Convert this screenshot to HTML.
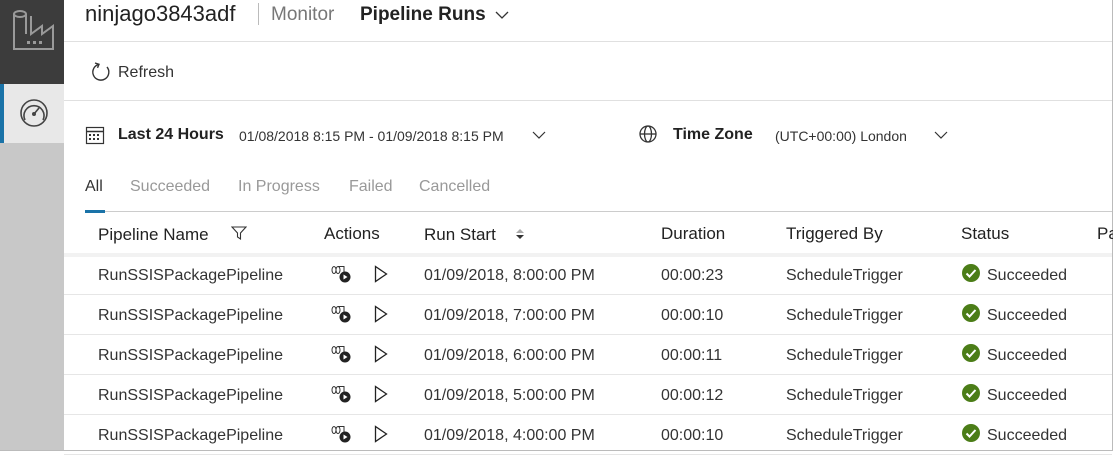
<!DOCTYPE html>
<html><head><style>
*{margin:0;padding:0;box-sizing:border-box}
body{width:1113px;height:451px;overflow:hidden;background:#fff;font-family:"Segoe UI","Liberation Sans",sans-serif;color:#222;position:relative}
.a{position:absolute;white-space:nowrap}
.sb1{left:0;top:0;width:64px;height:84px;background:#3c3c3c}
.sb2{left:0;top:84px;width:64px;height:59px;background:#e8e8e8;border-left:4px solid #1a73a8}
.sb3{left:0;top:143px;width:64px;height:308px;background:#c8c8c8}
.hl{height:1px;background:#e0e0e0}
.row{left:64px;width:1048px;height:40px;border-bottom:1px solid #e6e6e6;font-size:16px;color:#333}
.row span{position:absolute;top:12px}
.th{font-size:17px;color:#222}
</style></head><body>
<div class="a sb1"><svg width="64" height="84"><g fill="none" stroke="#9a9a9a" stroke-width="2"><path d="M14 14v35h39V26l-11 8v-8l-11 8V16"/><ellipse cx="20" cy="14" rx="6" ry="3"/><path d="M26 14v20"/></g><g fill="#9a9a9a"><rect x="27" y="41" width="3" height="3"/><rect x="33" y="41" width="3" height="3"/><rect x="39" y="41" width="3" height="3"/></g></svg></div>
<div class="a sb2"><svg width="60" height="59" style="position:absolute;left:-4px"><g fill="none" stroke="#444" stroke-width="1.6"><circle cx="34" cy="29" r="13"/><path d="M25 36a10 10 0 1 1 18 0"/><path d="M34 30l5-6"/></g><circle cx="34" cy="30" r="2" fill="#444"/></svg></div>
<div class="a sb3"></div>
<div class="a" style="right:0;top:0;width:1px;height:451px;background:#bbb"></div>
<div class="a" style="left:0;bottom:0;width:1113px;height:1px;background:#bbb"></div>

<div class="a" style="left:85px;top:0;font-size:22px;color:#222;line-height:28px">ninjago3843adf</div>
<div class="a" style="left:258px;top:3px;width:1px;height:22px;background:#bbb"></div>
<div class="a" style="left:271px;top:2px;font-size:19px;color:#777;line-height:26px">Monitor</div>
<div class="a" style="left:360px;top:2px;font-size:19px;color:#222;font-weight:600;line-height:26px">Pipeline Runs <svg width="14" height="10" style="margin-left:4px"><path d="M1 2l6 6 6-6" fill="none" stroke="#333" stroke-width="1.3"/></svg></div>
<div class="a hl" style="left:64px;top:41px;width:1048px"></div>

<svg class="a" style="left:90px;top:61px" width="22" height="22"><path d="M17 6A8 8 0 1 1 9 3.3" fill="none" stroke="#333" stroke-width="1.4"/><path d="M5 2l4 1.3-1.5 3.5" fill="none" stroke="#333" stroke-width="1.4"/></svg>
<div class="a" style="left:118px;top:64px;font-size:16px;color:#333">Refresh</div>
<div class="a hl" style="left:64px;top:100px;width:1048px"></div>

<svg class="a" style="left:85px;top:125px" width="20" height="20"><rect x="1.5" y="2.5" width="17" height="16" fill="none" stroke="#333" stroke-width="1.2"/><path d="M1.5 6.5h17" stroke="#333" stroke-width="1.5"/><g fill="#333"><rect x="4" y="9" width="2" height="2"/><rect x="8" y="9" width="2" height="2"/><rect x="12" y="9" width="2" height="2"/><rect x="4" y="13" width="2" height="2"/><rect x="8" y="13" width="2" height="2"/><rect x="12" y="13" width="2" height="2"/></g></svg>
<div class="a" style="left:118px;top:126px;font-size:16px;font-weight:600;color:#222">Last 24 Hours</div>
<div class="a" style="left:239px;top:128px;font-size:14px;color:#333">01/08/2018 8:15 PM - 01/09/2018 8:15 PM</div>
<svg class="a" style="left:532px;top:130px" width="14" height="10"><path d="M1 2l6 6 6-6" fill="none" stroke="#333" stroke-width="1.2"/></svg>
<svg class="a" style="left:638px;top:124px" width="20" height="20"><g fill="none" stroke="#333" stroke-width="1.3"><circle cx="10" cy="10" r="8"/><ellipse cx="10" cy="10" rx="3.5" ry="8"/><path d="M2 10h16"/></g></svg>
<div class="a" style="left:673px;top:126px;font-size:16px;font-weight:600;color:#222">Time Zone</div>
<div class="a" style="left:775px;top:128px;font-size:14px;color:#333">(UTC+00:00) London</div>
<svg class="a" style="left:934px;top:130px" width="14" height="10"><path d="M1 2l6 6 6-6" fill="none" stroke="#333" stroke-width="1.2"/></svg>

<div class="a" style="left:85px;top:178px;font-size:16px;color:#333">All</div>
<div class="a" style="left:130px;top:178px;font-size:16px;color:#999">Succeeded</div>
<div class="a" style="left:238px;top:178px;font-size:16px;color:#999">In Progress</div>
<div class="a" style="left:349px;top:178px;font-size:16px;color:#999">Failed</div>
<div class="a" style="left:419px;top:178px;font-size:16px;color:#999">Cancelled</div>
<div class="a" style="left:85px;top:211px;width:1027px;height:1px;background:#ccc"></div>
<div class="a" style="left:85px;top:210px;width:20px;height:3px;background:#1a73a8"></div>

<div class="a th" style="left:98px;top:225px">Pipeline Name</div>
<svg class="a" style="left:231px;top:226px" width="16" height="14"><path d="M1 1h14l-5.5 6v6l-3-2V7z" fill="none" stroke="#333" stroke-width="1.1"/></svg>
<div class="a th" style="left:324px;top:224px">Actions</div>
<div class="a th" style="left:424px;top:225px">Run Start</div>
<svg class="a" style="left:516px;top:228px" width="8" height="12"><path d="M0 5l4-4 4 4z" fill="#aaa"/><path d="M0 7l4 4 4-4z" fill="#333"/></svg>
<div class="a th" style="left:661px;top:224px">Duration</div>
<div class="a th" style="left:786px;top:224px">Triggered By</div>
<div class="a th" style="left:961px;top:224px">Status</div>
<div class="a th" style="left:1097px;top:224px">Pa</div>
<div class="a" style="left:64px;top:253px;width:1048px;height:4px;background:#f2f2f2"></div>

<div id="rows"></div>
<script>
var t=["8","7","6","5","4"],d=["23","10","11","12","10"],h="";
for(var i=0;i<5;i++){var y=255+40*i;
h+='<div class="a row" style="top:'+y+'px"><span style="left:34px">RunSSISPackagePipeline</span>'+
'<svg style="position:absolute;left:266px;top:9px" width="24" height="20"><g fill="none" stroke="#333" stroke-width="1"><ellipse cx="4" cy="6" rx="2" ry="3.5"/><ellipse cx="8" cy="6" rx="2" ry="3.5"/><path d="M8 2.5h6v6"/></g><circle cx="15" cy="13" r="5.5" fill="#222"/><path d="M13.5 10.5v5l4-2.5z" fill="#fff"/></svg>'+
'<svg style="position:absolute;left:310px;top:10px" width="14" height="18"><path d="M1.5 1.5l11 7.5-11 7.5z" fill="none" stroke="#222" stroke-width="1.3"/></svg>'+
'<span style="left:360px">01/09/2018, '+t[i]+':00:00 PM</span><span style="left:597px">00:00:'+d[i]+'</span><span style="left:722px">ScheduleTrigger</span>'+
'<svg style="position:absolute;left:897px;top:8px" width="20" height="20"><circle cx="10" cy="10" r="9" fill="#4b7d17"/><path d="M5.5 10.5l3 3 6-6.5" fill="none" stroke="#fff" stroke-width="2"/></svg>'+
'<span style="left:923px">Succeeded</span></div>';}
document.getElementById("rows").innerHTML=h;
</script>
</body></html>
